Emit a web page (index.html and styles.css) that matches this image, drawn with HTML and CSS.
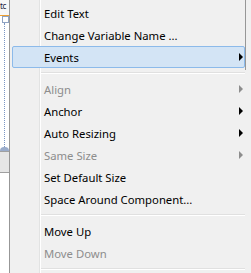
FILE: index.html
```html
<!DOCTYPE html>
<html lang="en">
<head>
    <meta charset="UTF-8">
    <title>Context Menu</title>
    <link rel="stylesheet" href="styles.css">
</head>
<body>
    <div class="canvas">
        <div class="caption">tc</div>
        <div class="selection">
            <div class="handle"></div>
            <div class="guide"></div>
            <div class="anchor"></div>
        </div>
        <div class="toolbar"></div>
        <div class="sheet"></div>
    </div>

    <div class="menu">
        <div class="item">Edit Text</div>
        <div class="item">Change Variable Name ...</div>
        <div class="item active">Events<span class="arrow"></span></div>
        <div class="sep"></div>
        <div class="item disabled">Align<span class="arrow"></span></div>
        <div class="item">Anchor<span class="arrow"></span></div>
        <div class="item">Auto Resizing<span class="arrow"></span></div>
        <div class="item disabled">Same Size<span class="arrow"></span></div>
        <div class="item">Set Default Size</div>
        <div class="item">Space Around Component...</div>
        <div class="sep"></div>
        <div class="item">Move Up</div>
        <div class="item disabled">Move Down</div>
        <div class="sep"></div>
    </div>

    <div class="edge">
        <div class="edge-line"></div>
    </div>
</body>
</html>
```

FILE: styles.css
```css
body {
    margin: 0;
    padding: 0;
    width: 251px;
    height: 273px;
    overflow: hidden;
    display: flex;
    background-color: #f0f0f0;
    font-family: 'Noto Sans', 'Open Sans', sans-serif;
    font-size: 11.3px;
    color: #000000;
}

/* designer canvas peeking out on the left */
.canvas {
    width: 9px;
    flex-shrink: 0;
    display: flex;
    flex-direction: column;
    background-color: #ffffff;
    overflow: hidden;
}

.caption {
    height: 15px;
    line-height: 12px;
    font-size: 8px;
    letter-spacing: -0.5px;
    color: #1a1a40;
    background-color: #f7f7f7;
    border-bottom: 1px solid #f0a030;
    white-space: nowrap;
}

.selection {
    height: 135px;
    display: flex;
    flex-direction: column;
    align-items: flex-start;
}

.handle {
    width: 5px;
    height: 5px;
    margin-left: 2px;
    border: 1px solid #8fa3c2;
    background-color: #ffffff;
}

.guide {
    flex: 1;
    margin-left: 4px;
    border-left: 1px dotted #7b96c4;
}

.anchor {
    width: 9px;
    height: 4px;
    background-color: #9aaccb;
    border-radius: 4px 4px 0 0;
}

.toolbar {
    height: 20px;
    background-color: #e6e6e6;
    border-top: 1px solid #a0a0a0;
    border-bottom: 1px solid #a0a0a0;
}

.sheet {
    flex: 1;
    background-color: #ffffff;
}

/* popup menu */
.menu {
    width: 235px;
    flex-shrink: 0;
    padding-top: 2px;
    border-left: 1px solid #979797;
    background-color: #f0f0f0;
    background-image: linear-gradient(to right, transparent 29px, #e2e3e3 29px, #e2e3e3 30px, #ffffff 30px, #ffffff 31px, transparent 31px);
}

.item {
    height: 22px;
    margin-left: 2px;
    padding-left: 31px;
    padding-right: 1px;
    display: flex;
    align-items: center;
    box-sizing: border-box;
    border: 1px solid transparent;
}

.item.active {
    background-color: #d3e4f5;
    border-color: #8cbaea;
    border-radius: 2px;
}

.item.disabled {
    color: #8d8d8d;
}

.arrow {
    margin-left: auto;
    width: 0;
    height: 0;
    border-left: 4px solid #000000;
    border-top: 4px solid transparent;
    border-bottom: 4px solid transparent;
}

.item.disabled .arrow {
    border-left-color: #8d8d8d;
}

.sep {
    height: 10px;
    margin-left: 31px;
    background-image: linear-gradient(to bottom, transparent 4px, #e0e0e0 4px, #e0e0e0 5px, #ffffff 5px, #ffffff 6px, transparent 6px);
}

.edge {
    flex: 1;
    background-color: #f0f0f0;
}

.edge-line {
    height: 70px;
    width: 1px;
    background-color: #979797;
}
```
